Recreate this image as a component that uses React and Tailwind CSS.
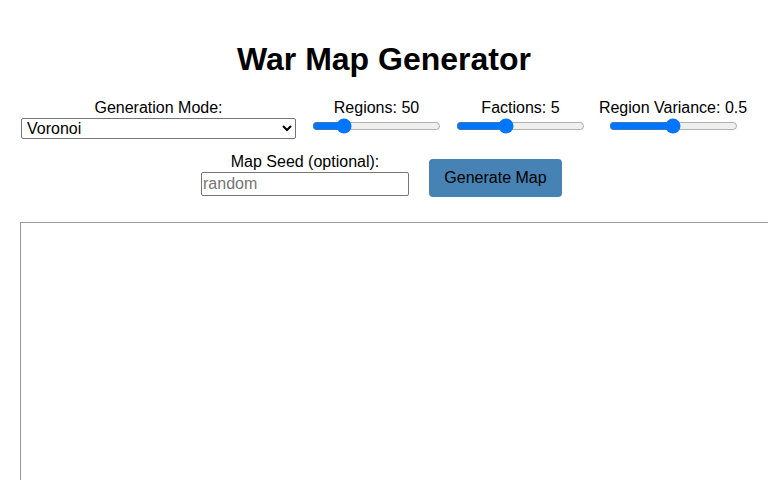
import React from 'react';

const font = { fontFamily: '"Liberation Sans", Arial, sans-serif' };

function RangeField({ label, min, max, step, value, className }) {
  return (
    <div className={`flex flex-col items-center ${className}`}>
      <label className="leading-[18px] text-base whitespace-nowrap">{label}</label>
      <input
        type="range"
        min={min}
        max={max}
        step={step}
        defaultValue={value}
        className="w-[129px] mt-[1px]"
      />
    </div>
  );
}

export default function App() {
  return (
    <div className="h-[480px] overflow-hidden bg-white text-black px-[20px] pt-[20px]" style={font}>
      <h1 className="text-[32px] font-bold text-center leading-[37px] mt-[21px] mb-[21px]">
        War Map Generator
      </h1>

      {/* generation controls */}
      <div className="flex justify-center items-start">
        <div className="flex flex-col items-center w-[275px]">
          <label className="leading-[18px] text-base">Generation Mode:</label>
          <select
            defaultValue="voronoi"
            className="w-[275px] h-[21px] mt-[1px] border border-[#767676] rounded-[2px] text-base leading-[18px] pl-[1px]"
          >
            <option value="voronoi">Voronoi</option>
            <option value="grid">Grid</option>
            <option value="hex">Hexagonal</option>
          </select>
        </div>
        <RangeField label="Regions: 50" min={10} max={200} step={1} value={50} className="ml-[14px] w-[133px]" />
        <RangeField label="Factions: 5" min={2} max={10} step={1} value={5} className="ml-[11px] w-[133px]" />
        <RangeField label="Region Variance: 0.5" min={0} max={1} step={0.1} value={0.5} className="ml-[12px] w-[148px]" />
      </div>

      <div className="flex justify-center items-start mt-[14px] pr-[5px]">
        <div className="flex flex-col items-center w-[208px]">
          <label className="leading-[18px] text-base whitespace-nowrap">Map Seed (optional):</label>
          <input
            type="text"
            placeholder="random"
            className="w-[208px] h-[24px] mt-[1px] border border-[#767676] rounded-[2px] px-[1px] text-base placeholder:text-[#757575]"
          />
        </div>
        <button className="ml-[20px] mt-[6px] w-[133px] h-[38px] bg-[#4682b4] rounded-[4px] text-base text-black">
          Generate Map
        </button>
      </div>

      {/* map canvas */}
      <div className="mt-[25px] w-[800px] h-[600px] border border-[#999999] bg-white"></div>
    </div>
  );
}
